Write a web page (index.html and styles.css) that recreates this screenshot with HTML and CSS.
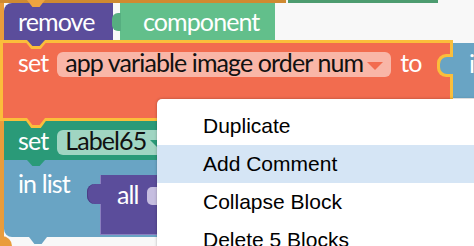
FILE: index.html
```html
<!DOCTYPE html>
<html>
<head>
<meta charset="utf-8">
<link rel="stylesheet" href="styles.css">
</head>
<body>
<div class="canvas">
  <div class="topstrip"><span class="ts-orange"></span><span class="ts-green"></span></div>
  <div class="stack">
    <div class="row1">
      <div class="blk remove">remove
        <i class="tab tab-top"></i>
        <i class="tab tab-purple-out"></i>
        <i class="tab tab-purple"></i>
      </div>
      <div class="blk component">component<i class="ptab ptab-green"></i></div>
    </div>
    <div class="row2">
      <div class="blk setblk">
        <span class="lbl">set</span>
        <span class="pill pill-salmon">app variable image order num<span class="arrow"></span></span>
        <span class="lbl to">to</span>
        <i class="notch"></i>
        <i class="tab tab-orange-out"></i>
        <i class="tab tab-orange"></i>
      </div>
      <div class="blk bluer">is</div>
    </div>
    <div class="blk teal">
      <span class="lbl">set</span>
      <span class="pill pill-teal">Label65<span class="arrow"></span></span>
      <i class="tab tab-teal"></i>
    </div>
    <div class="blk inlist">
      <span class="lbl lbl-inlist">in list</span>
      <div class="blk all"><span class="lbl">all</span><span class="lav"></span><i class="ptab ptab-purple"></i></div>
      <i class="tab tab-blue"></i>
    </div>
    <i class="corner"></i>
  </div>
  <div class="menu">
    <div class="item">Duplicate</div>
    <div class="item hl">Add Comment</div>
    <div class="item">Collapse Block</div>
    <div class="item">Delete 5 Blocks</div>
  </div>
</div>
</body>
</html>
```
FILE: styles.css
```css
body { margin: 0; }
.canvas {
  position: relative;
  width: 474px;
  height: 246px;
  overflow: hidden;
  background: #f8f8f8;
  font-family: Lato, "Noto Sans", sans-serif;
  font-size: 25px;
  letter-spacing: -0.9px;
}
.topstrip { display: flex; height: 3px; }
.ts-orange { width: 286px; background: #cf8a31; }
.ts-green { width: 150px; margin-left: 2px; background: #4d9c70; }
.stack {
  position: relative;
  padding-left: 4px;
  padding-bottom: 9px;
  background: linear-gradient(to right, #e99c3b 4px, transparent 4px);
}
.blk { position: relative; box-sizing: border-box; color: #fff; }
.row1 { display: flex; height: 37px; line-height: 37px; }
.remove { flex-shrink: 0; width: 109px; background: #5b4d9b; padding-left: 14px; border-top-left-radius: 8px; }
.component { flex-shrink: 0; width: 155px; margin-left: 7px; background: #62bf8b; padding-left: 23px; }
.row2 { display: flex; align-items: flex-start; margin-left: -4px; }
.setblk {
  flex-shrink: 0;
  width: 453px;
  height: 81px;
  background: #f26c4f;
  border: 3px solid #fbbe3b;
  padding: 9px 0 0 15px;
  display: flex;
  align-items: baseline;
}
.lbl { line-height: 20px; white-space: nowrap; }
.pill {
  display: inline-flex;
  line-height: 20px;
  padding: 0 8px 5px;
  border-radius: 6px;
  color: #111;
  margin-left: 9px;
  white-space: nowrap;
}
.pill-salmon { background: #f9b6a7; }
.arrow {
  flex-shrink: 0;
  width: 0;
  height: 0;
  border-left: 8px solid transparent;
  border-right: 8px solid transparent;
  border-top: 8px solid #f26c4f;
  margin: 10px 0 0 4px;
  align-self: flex-start;
}
.to { margin-left: 9px; }
.bluer {
  flex: 1;
  min-width: 0;
  overflow: hidden;
  margin-top: 3px;
  height: 55px;
  background: #69a4c4;
  padding: 10px 0 0 16px;
  line-height: 20px;
}
.teal {
  width: 300px;
  height: 39px;
  background: #2a9a78;
  padding: 9px 0 0 14px;
  display: flex;
  align-items: baseline;
}
.pill-teal { background: #a0d5c2; }
.pill-teal .arrow { border-top-color: #2a9a78; }
.inlist {
  width: 300px;
  height: 77px;
  background: #69a4c4;
  padding: 13px 0 0 14px;
  display: flex;
  align-items: flex-start;
  border-bottom-left-radius: 8px;
}
.lbl-inlist { width: 82px; flex-shrink: 0; }
.all {
  flex-shrink: 0;
  margin-top: 2px;
  height: 60px;
  width: 120px;
  background: #5b4d9b;
  padding: 9px 0 0 17px;
  display: flex;
  align-items: flex-start;
  box-shadow: inset 1px -1px 0 #8a7fc0;
}
.lav { margin: 3px 0 0 8px; width: 40px; height: 18px; background: #c6bee0; border-radius: 5px; }

.corner {
  position: absolute;
  left: 0;
  bottom: 0;
  width: 12px;
  height: 10px;
  background: #e99c3b;
  border-top-right-radius: 10px;
}

.tab {
  position: absolute;
  z-index: 2;
  clip-path: polygon(0 0, 100% 0, 70% 100%, 30% 100%);
}
.tab-top { left: 23px; top: -3px; width: 18px; height: 7px; background: #eda43f; }
.tab-purple-out { left: 20px; top: 100%; width: 24px; height: 9px; background: #fbbe3b; }
.tab-purple { left: 23px; top: 100%; width: 18px; height: 6px; background: #5b4d9b; }
.tab-orange-out { left: 21px; top: 100%; width: 24px; height: 10px; background: #fbbe3b; }
.tab-orange { left: 24px; top: 100%; width: 18px; height: 7px; background: #f26c4f; }
.tab-teal { left: 23px; top: 100%; width: 18px; height: 6px; background: #2a9a78; }
.tab-blue { left: 25px; top: 100%; width: 18px; height: 7px; background: #69a4c4; }

.ptab { position: absolute; z-index: 2; }
.ptab-green { left: -8px; top: 10px; width: 9px; height: 18px; background: #56ae80; border-radius: 6px 0 0 6px; }
.ptab-purple { left: -13px; top: 9px; width: 14px; height: 20px; background: #5b4d9b; border-radius: 8px 0 0 8px; box-shadow: inset 1px 0 0 #4a3e85; }

.notch {
  position: absolute;
  z-index: 2;
  right: -3px;
  top: 11px;
  width: 16px;
  height: 23px;
  background: #fbbe3b;
  border-radius: 9px 0 0 9px;
}
.notch::after {
  content: "";
  position: absolute;
  left: 3px;
  top: 3px;
  bottom: 3px;
  right: 0;
  border-radius: 7px 0 0 7px;
  background: #69a4c4;
}

.menu {
  position: absolute;
  z-index: 5;
  left: 157px;
  top: 99px;
  width: 330px;
  height: 170px;
  box-sizing: border-box;
  padding-top: 8px;
  background: #fff;
  border-radius: 5px 0 0 0;
  box-shadow: 0 0 3px rgba(0, 0, 0, 0.3);
  font-family: "Liberation Sans", Arial, sans-serif;
  font-size: 21px;
  letter-spacing: 0;
  color: #000;
}
.item { height: 38px; line-height: 38px; padding-left: 46px; }
.item.hl { background: #d5e5f5; }
```
